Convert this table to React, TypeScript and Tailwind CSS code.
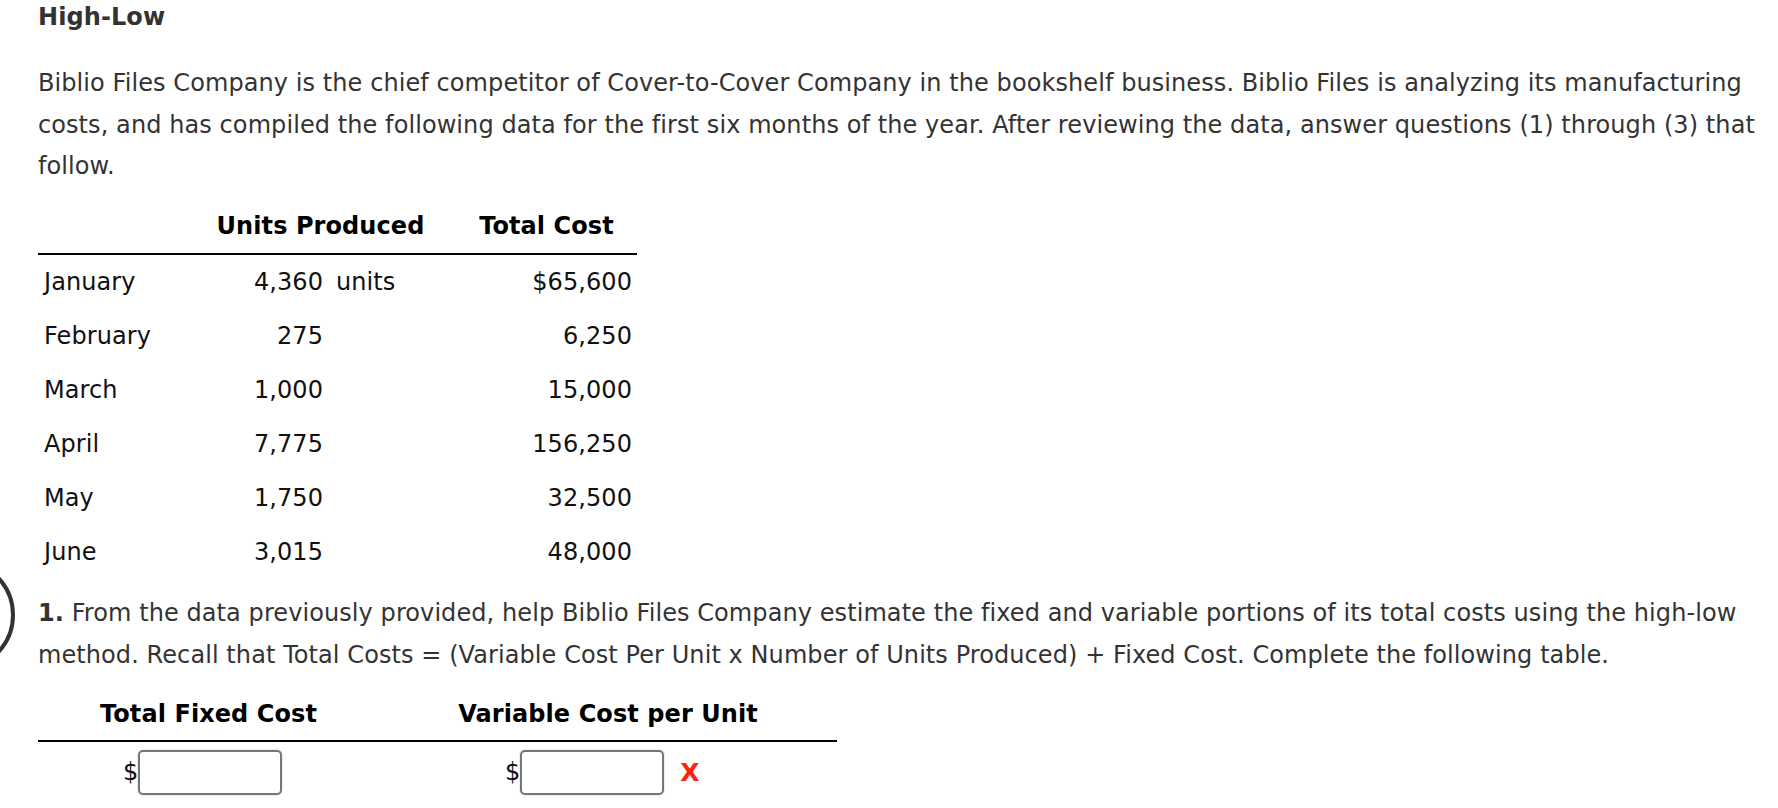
import { ReactNode } from "react";

type Row = { month: string; units: string; unitLabel?: string; cost: string };

const rows: Row[] = [
    { month: "January", units: "4,360", unitLabel: "units", cost: "$65,600" },
    { month: "February", units: "275", cost: "6,250" },
    { month: "March", units: "1,000", cost: "15,000" },
    { month: "April", units: "7,775", cost: "156,250" },
    { month: "May", units: "1,750", cost: "32,500" },
    { month: "June", units: "3,015", cost: "48,000" },
];

function DataTable(): ReactNode {
    return (
        <div className="w-[599px] mt-[18px]">
            <div className="flex h-[49px] border-b-2 border-black text-black font-bold leading-[40px]">
                <span className="w-[172px]"></span>
                <span className="w-[221px] text-center">Units Produced</span>
                <span className="w-[25px]"></span>
                <span className="flex-1 text-center">Total Cost</span>
            </div>
            {rows.map((r) => (
                <div key={r.month} className="flex h-[54px] leading-[54px] text-[#111]">
                    <span className="w-[172px] pl-[6px]">{r.month}</span>
                    <span className="w-[113px] text-right">{r.units}</span>
                    <span className="w-[100px] pl-[13px]">{r.unitLabel}</span>
                    <span className="flex-1 text-right pr-[5px]">{r.cost}</span>
                </div>
            ))}
        </div>
    );
}

function MoneyInput(): ReactNode {
    return (
        <span className="flex items-center">
            <span className="text-[#111] leading-none">$</span>
            <input
                type="text"
                className="w-[144px] h-[45px] border-2 border-[#777] rounded-[5px] bg-white shadow-[0_0_2px_rgba(0,0,0,0.25)] outline-none"
            />
        </span>
    );
}

export default function App(): ReactNode {
    return (
        <div
            className="relative min-h-[808px] bg-white overflow-hidden pl-[38px] pr-[8px] text-[24px] text-[#333] tracking-[0.08px]"
            style={{ fontFamily: '"DejaVu Sans", Verdana, sans-serif' }}
        >
            <h1 className="font-bold leading-[34px] text-[#333]">High-Low</h1>

            <p className="mt-[29px] leading-[41.5px]">
                Biblio Files Company is the chief competitor of Cover-to-Cover Company in the bookshelf business. Biblio Files is analyzing its manufacturing costs, and has compiled the following data for the first six months of the year. After reviewing the data, answer questions (1) through (3) that follow.
            </p>

            <DataTable />

            {/* question marker, mostly off-screen on the left */}
            <div className="absolute left-[-97px] top-[559px] w-[112px] h-[112px] rounded-full border-4 border-[#333]"></div>

            <p className="mt-[13px] leading-[42px]">
                <b>1.</b> From the data previously provided, help Biblio Files Company estimate the fixed and variable portions of its total costs using the high-low method. Recall that Total Costs = (Variable Cost Per Unit x Number of Units Produced) + Fixed Cost. Complete the following table.
            </p>

            <div className="w-[799px] mt-[18px]">
                <div className="flex h-[48px] border-b-2 border-black text-black font-bold leading-[40px]">
                    <span className="w-[341px] text-center">Total Fixed Cost</span>
                    <span className="flex-1 text-center">Variable Cost per Unit</span>
                </div>
                <div className="flex pt-[8px]">
                    <div className="w-[341px] pl-[85px]">
                        <MoneyInput />
                    </div>
                    <div className="flex-1 pl-[126px] flex items-center">
                        <MoneyInput />
                        <span className="ml-[16px] text-[#f21] font-bold text-[25px] leading-none">X</span>
                    </div>
                </div>
            </div>
        </div>
    );
}
